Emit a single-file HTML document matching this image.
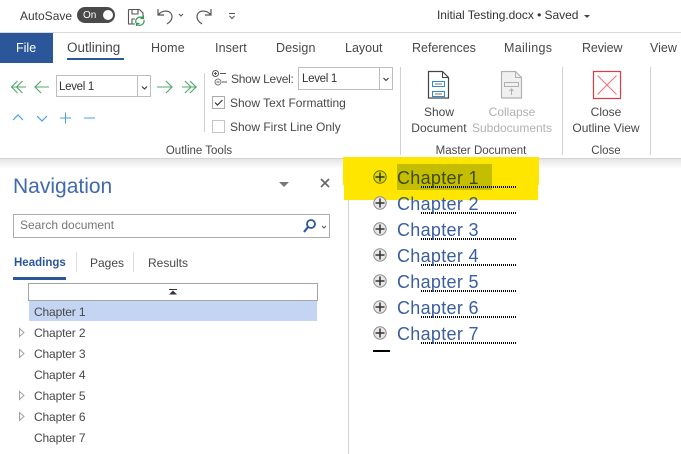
<!DOCTYPE html>
<html><head><meta charset="utf-8"><style>
html,body{margin:0;padding:0;background:#fff}
#p{position:relative;width:681px;height:454px;overflow:hidden;background:#fff;font-family:"Liberation Sans",sans-serif;color:#484848}
.t{position:absolute;white-space:nowrap;line-height:16px;font-size:12px}
.c{text-align:center;transform:translateX(-50%)}
.b{position:absolute}
svg{position:absolute;left:0;top:0}
</style></head><body><div id="p">

<div class="b" style="left:0;top:32px;width:681px;height:1px;background:#d9d9d9"></div>
<div class="b" style="left:0;top:33px;width:53px;height:30px;background:#2b579a"></div>
<div class="t" style="left:16px;top:40px;color:#fff;font-size:12.5px">File</div>
<div class="t" style="left:20px;top:8px;color:#3a3a3a;font-size:12px">AutoSave</div>
<div class="b" style="left:77px;top:7px;width:38px;height:16px;border-radius:8px;background:#4a4a4a"></div>
<div class="t" style="left:83px;top:8px;color:#fff;font-size:10px">On</div>
<div class="b" style="left:103px;top:10px;width:10px;height:10px;border-radius:5px;background:#fff"></div>
<div class="t" style="left:437px;top:7px;color:#333;font-size:12px;letter-spacing:-.05px">Initial Testing.docx • Saved</div>

<div class="t" style="left:67px;top:40px;font-size:13.5px;color:#484848">Outlining</div>
<div class="b" style="left:67px;top:58px;width:57px;height:2px;background:#2b579a"></div>
<div class="t" style="left:151px;top:40px;font-size:12.5px;letter-spacing:.1px">Home</div>
<div class="t" style="left:215px;top:40px;font-size:12.5px;letter-spacing:.1px">Insert</div>
<div class="t" style="left:276px;top:40px;font-size:12.5px;letter-spacing:.1px">Design</div>
<div class="t" style="left:345px;top:40px;font-size:12.5px">Layout</div>
<div class="t" style="left:412px;top:40px;font-size:12.5px">References</div>
<div class="t" style="left:504px;top:40px;font-size:12.5px;letter-spacing:.3px">Mailings</div>
<div class="t" style="left:582px;top:40px;font-size:12.5px;letter-spacing:-.1px">Review</div>
<div class="t" style="left:650px;top:40px;font-size:12.5px">View</div>

<div class="b" style="left:56px;top:75px;width:95px;height:22px;border:1px solid #bdbdbd;box-sizing:border-box"></div>
<div class="b" style="left:137px;top:75px;width:1px;height:22px;background:#bdbdbd"></div>
<div class="t" style="left:59px;top:79px;color:#333;font-size:11.5px;letter-spacing:-.3px">Level 1</div>

<div class="t" style="left:231px;top:71px;letter-spacing:-.25px">Show Level:</div>
<div class="b" style="left:298px;top:67px;width:95px;height:23px;border:1px solid #bdbdbd;box-sizing:border-box"></div>
<div class="b" style="left:379px;top:67px;width:1px;height:23px;background:#bdbdbd"></div>
<div class="t" style="left:302px;top:71px;color:#333;font-size:11.5px;letter-spacing:-.3px">Level 1</div>
<div class="b" style="left:212px;top:96px;width:13px;height:13px;border:1px solid #ababab;box-sizing:border-box"></div>
<div class="t" style="left:230px;top:95px">Show Text Formatting</div>
<div class="b" style="left:212px;top:120px;width:13px;height:13px;border:1px solid #c4c4c4;box-sizing:border-box"></div>
<div class="t" style="left:230px;top:119px">Show First Line Only</div>
<div class="t c" style="left:199px;top:143px;font-size:11.5px">Outline Tools</div>

<div class="t c" style="left:439px;top:104px">Show</div>
<div class="t c" style="left:439px;top:120px;letter-spacing:.1px">Document</div>
<div class="t c" style="left:512px;top:104px;color:#b1b1b1">Collapse</div>
<div class="t c" style="left:512px;top:120px;color:#b1b1b1;font-size:12px">Subdocuments</div>
<div class="t c" style="left:481px;top:143px;font-size:11.5px">Master Document</div>
<div class="t c" style="left:606px;top:104px">Close</div>
<div class="t c" style="left:606px;top:120px">Outline View</div>
<div class="t c" style="left:606px;top:143px;font-size:11.5px">Close</div>

<div class="b" style="left:0;top:159px;width:681px;height:10px;background:linear-gradient(#e6e6e6,#fff)"></div>
<div class="b" style="left:0;top:158px;width:681px;height:1px;background:#d4d4d4"></div>
<div class="b" style="left:348px;top:160px;width:1px;height:294px;background:#d4d4d4"></div>
<div class="b" style="left:343px;top:157px;width:196px;height:28px;background:#ffe600"></div>
<div class="b" style="left:344px;top:185px;width:194px;height:15px;background:#ffe600"></div>
<div class="b" style="left:397px;top:164px;width:95px;height:26px;background:#c4bd00"></div>

<svg width="681" height="454" fill="none">
 <!-- QAT -->
 <g stroke="#555" stroke-width="1.1">
  <path d="M128.500 9.500h11l3.500 3.500v4M128.500 9.500v14.500h6.500M132 9.500v4.500h6v-4.500M132 24v-5h3"/>
  <path d="M158 9v6h6M158 15c5-6 14-5 14 2 0 3-2 5-5 7" stroke-width="1.200"/>
  <path d="M211 9v6h-6M211 15c-5-6-14-5-14 2 0 3 2 5 5 7" stroke-width="1.200"/>
  <path d="M179 14l2 2 2-2M229 13.500h6M229.500 16l2.500 2.500 2.500-2.500"/>
 </g>
 <path d="M136 23a4.500 4.500 0 0 1 7-5M144 20a4.500 4.500 0 0 1-7 4.500M143.500 15.500v3h-3M136.500 26v-2.500h3" stroke="#2f9a56" stroke-width="1.200"/>
 <path d="M584 15h6l-3 3z" fill="#444"/>

 <!-- promote/demote arrows -->
 <g stroke="#4fa86a" stroke-width="1.100">
  <path d="M26 87H11M17.500 81l-6 6 6 6M22.500 81l-6 6 6 6"/>
  <path d="M49 87H35M41 81l-6 6 6 6"/>
  <path d="M157 87h15M166 81l6 6-6 6"/>
  <path d="M181 87h15M184 81l6 6-6 6M189 81l6 6-6 6" transform="translate(1 0)"/>
 </g>
 <g stroke="#4aa0e0" stroke-width="1.200">
  <path d="M13 120l5-5 5 5M37 116l5 5 5-5"/>
  <path d="M60 118h11M65.500 112.500v11M84 118h11" stroke-width="1"/>
 </g>
 <path d="M142 86.500l2.500 2.500 2.500-2.500M383.500 78l2.500 2.500 2.500-2.500" stroke="#333" stroke-width="1.100"/>

 <!-- show level icon -->
 <circle cx="215.500" cy="73.500" r="3" stroke="#555"/><circle cx="218" cy="82" r="3" stroke="#777"/>
 <path d="M214 73.500h3M215.500 72v3M216.500 82h3M220 73.500h6M222 82h5" stroke="#555"/>
 <path d="M215 102.500l2.500 2.500 5-5" stroke="#333" stroke-width="1.200"/>

 <!-- separators -->
 <g fill="#d0d0d0" stroke="none">
  <rect x="204" y="73" width="1" height="59"/>
  <rect x="400" y="67" width="1" height="88"/>
  <rect x="562" y="67" width="1" height="88"/>
  <rect x="650" y="67" width="1" height="88"/>
 </g>

 <!-- Show Document -->
 <path d="M428.500 71.500h14l6 6v20.500h-20z" fill="#fff" stroke="#444" stroke-width="1.200"/>
 <path d="M442.500 71.500v6h6" stroke="#444"/>
 <rect x="432.500" y="81.500" width="12" height="5" stroke="#2e8bd0"/><rect x="432.500" y="91.500" width="12" height="5" stroke="#2e8bd0"/>
 <path d="M435 84h7M435 94h7" stroke="#777"/>
 <!-- Collapse -->
 <path d="M501.500 71.500h14l6 6v20.500h-20z" fill="#f0f0f0" stroke="#b0b0b0" stroke-width="1.200"/>
 <path d="M515.500 71.500v6h6" stroke="#b0b0b0"/>
 <rect x="504.500" y="82.500" width="14" height="4" stroke="#b0b0b0"/>
 <path d="M511.500 95v-6M509.500 91l2-2 2 2" stroke="#b0b0b0"/>
 <!-- Close -->
 <rect x="593.500" y="71.500" width="27" height="27" fill="#fff" stroke="#e6393f" stroke-width="1.200"/>
 <path d="M597.500 75.500l19 19M616.500 75.500l-19 19" stroke="#f07076" stroke-width="1"/>

 <!-- Nav header -->
 <path d="M279 182h10l-5 5z" fill="#777"/>
 <path d="M321 179l8 8M329 179l-8 8" stroke="#666" stroke-width="1.700"/>
 <rect x="13.500" y="214.500" width="316" height="23" stroke="#adadad" fill="#fff"/>
 <circle cx="311" cy="224" r="4" stroke="#2b579a" stroke-width="1.800"/>
 <path d="M308 227l-4 5" stroke="#2b579a" stroke-width="2.200"/>
 <path d="M322 226l2 2 2-2" stroke="#555"/>
 <rect x="76" y="252" width="1" height="20" fill="#ddd"/><rect x="133" y="252" width="1" height="20" fill="#ddd"/>
 <rect x="13" y="277" width="53" height="3" fill="#2b579a"/>
 <rect x="28.500" y="283.500" width="289" height="17" stroke="#a6a6a6" fill="#fff"/>
 <path d="M169 289.500h8" stroke="#333"/>
 <path d="M173 290.500l-4 4h8z" fill="#333"/>
 <rect x="29" y="301" width="288" height="20" fill="#c3d5f2"/>
 <g stroke="#a0a0a0" fill="#fff">
  <path d="M19.500 328.500v8l4.500-4z"/><path d="M19.500 349.500v8l4.500-4z"/><path d="M19.500 391.500v8l4.500-4z"/><path d="M19.500 412.500v8l4.500-4z"/>
 </g>
 <!-- doc -->
 <g stroke="#8c8c8c" stroke-width="1" fill="#e8e8e8">
  <circle cx="380" cy="177" r="6.200" fill="#dcdc00" stroke="#6b6b00"/>
  <circle cx="380" cy="203" r="6.200"/><circle cx="380" cy="229" r="6.200"/><circle cx="380" cy="255" r="6.200"/>
  <circle cx="380" cy="281" r="6.200"/><circle cx="380" cy="307" r="6.200"/><circle cx="380" cy="333" r="6.200"/>
 </g>
 <path d="M375.500 177h9M380 172.500v9M375.500 203h9M380 198.500v9M375.500 229h9M380 224.500v9M375.500 255h9M380 250.500v9M375.500 281h9M380 276.500v9M375.500 307h9M380 302.500v9M375.500 333h9M380 328.500v9" stroke="#333" stroke-width="1.500"/>
 <rect x="373" y="350" width="17" height="2" fill="#000"/>
 <g stroke="#000" stroke-width="2" stroke-dasharray="1 1">
  <path d="M421 187h96M421 213h96M421 239h96M421 265h96M421 291h96M421 317h96M421 343h96"/>
 </g>
</svg>

<div class="t" style="left:13px;top:174px;font-size:21px;line-height:26px;color:#3f6aab;font-weight:400">Navigation</div>
<div class="t" style="left:20px;top:217px;color:#777;font-size:12px">Search document</div>
<div class="t" style="left:14px;top:255px;color:#2b579a;font-weight:700;font-size:11.500px;line-height:17px">Headings</div>
<div class="t" style="left:90px;top:255px">Pages</div>
<div class="t" style="left:148px;top:255px">Results</div>
<div class="t" style="left:34px;top:304px;letter-spacing:-.15px">Chapter 1</div>
<div class="t" style="left:34px;top:325px;letter-spacing:-.15px">Chapter 2</div>
<div class="t" style="left:34px;top:346px;letter-spacing:-.15px">Chapter 3</div>
<div class="t" style="left:34px;top:367px;letter-spacing:-.15px">Chapter 4</div>
<div class="t" style="left:34px;top:388px;letter-spacing:-.15px">Chapter 5</div>
<div class="t" style="left:34px;top:409px;letter-spacing:-.15px">Chapter 6</div>
<div class="t" style="left:34px;top:430px;letter-spacing:-.15px">Chapter 7</div>

<div class="t" style="left:397px;top:165px;font-size:18px;line-height:26px;color:#3f4a10;letter-spacing:.3px">Chapter 1</div>
<div class="t" style="left:397px;top:191px;font-size:18px;line-height:26px;color:#3a5e9e;letter-spacing:.3px">Chapter 2</div>
<div class="t" style="left:397px;top:217px;font-size:18px;line-height:26px;color:#3a5e9e;letter-spacing:.3px">Chapter 3</div>
<div class="t" style="left:397px;top:243px;font-size:18px;line-height:26px;color:#3a5e9e;letter-spacing:.3px">Chapter 4</div>
<div class="t" style="left:397px;top:269px;font-size:18px;line-height:26px;color:#3a5e9e;letter-spacing:.3px">Chapter 5</div>
<div class="t" style="left:397px;top:295px;font-size:18px;line-height:26px;color:#3a5e9e;letter-spacing:.3px">Chapter 6</div>
<div class="t" style="left:397px;top:321px;font-size:18px;line-height:26px;color:#3a5e9e;letter-spacing:.3px">Chapter 7</div>
</div></body></html>
